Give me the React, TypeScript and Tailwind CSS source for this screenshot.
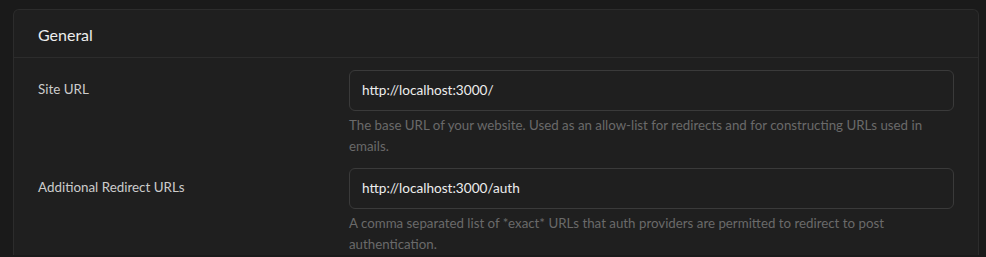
import React from "react";

function Row({ label, value, help }: { label: string; value: string; help: string }) {
  return (
    <div className="grid grid-cols-[311px_1fr]">
      <div className="pt-[9px] text-[13.4px] leading-5 text-[#cccccc]">{label}</div>
      <div className="flex flex-col">
        <div className="h-[41px] rounded-md border border-[#3a3a3a] bg-[#1f1f1f] px-3 flex items-center text-[13.6px] text-[#ededed]">
          {value}
        </div>
        <p className="mt-1 text-[13.3px] leading-[21px] text-[#6a6a6a]">{help}</p>
      </div>
    </div>
  );
}

export default function App() {
  return (
    <div className="min-h-[257px] bg-[#1a1a1a] pl-[13px] pt-[9px] pr-[7px]" style={{ fontFamily: "Lato, 'Noto Sans', sans-serif" }}>
      <div className="w-[966px] rounded-t-md border border-b-0 border-[#2c2c2c] bg-[#1f1f1f]">
        <div className="h-[48px] border-b border-[#2c2c2c] px-6 pt-[2px] flex items-center text-base text-[#ededed]">
          General
        </div>
        <div className="px-6 pt-3 flex flex-col gap-[11px]">
          <Row
            label="Site URL"
            value="http://localhost:3000/"
            help="The base URL of your website. Used as an allow-list for redirects and for constructing URLs used in emails."
          />
          <Row
            label="Additional Redirect URLs"
            value="http://localhost:3000/auth"
            help="A comma separated list of *exact* URLs that auth providers are permitted to redirect to post authentication."
          />
        </div>
      </div>
    </div>
  );
}
